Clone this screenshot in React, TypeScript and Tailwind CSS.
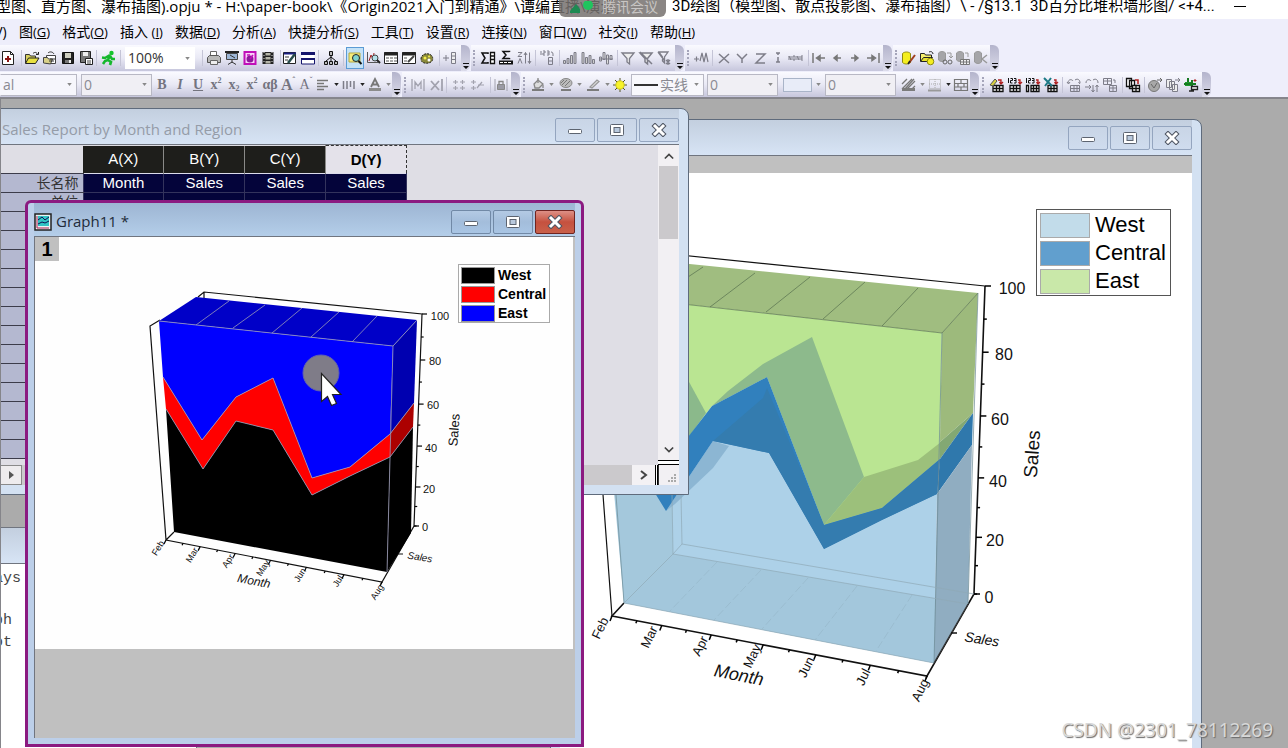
import React from "react";

type IconName = keyof typeof icons;

const GREY = "#7d7d88";

// 16x16 toolbar glyphs
const icons = {
  newDoc: (
    <>
      <path d="M2.500 1.500h8l3 3v10h-11z" fill="#fff" stroke="#222" />
      <path d="M10.500 1.500v3h3" fill="none" stroke="#222" />
      <path d="M8 6v6M5 9h6" stroke="#8c1414" strokeWidth="2" />
    </>
  ),
  open: (
    <>
      <path d="M1.500 13V4.500h4l1 1.500h5v2" fill="#d8d060" stroke="#333" />
      <path d="M1.500 13.500l3-5.500h10.500l-3.500 5.500z" fill="#e8e040" stroke="#222" />
      <path d="M9 3.500c2-2 4-1 4.500 1M12 4.500h2.500V2" fill="none" stroke="#222" />
    </>
  ),
  openTemplate: (
    <>
      <path d="M4.500 5.500h9v8h-9z" fill="#fff" stroke="#444" />
      <path d="M1.500 13V7.500h4l1 1.500h4l-2 5z" fill="#d8d088" stroke="#444" />
      <path d="M6 3c2-2 5-1 6 1M7 11h5M8 9h5" fill="none" stroke="#333" />
    </>
  ),
  save: (
    <>
      <path d="M2.500 2.500h11v11h-11z" fill="#222" stroke="#111" />
      <path d="M5 3h6v5H5z" fill="#cfcfc0" />
      <path d="M5 10h6v3H5z" fill="#777" />
      <path d="M9 10h2v3H9z" fill="#eee" />
    </>
  ),
  saveTemplate: (
    <>
      <path d="M2.500 1.500h10v11h-10z" fill="#777" stroke="#222" />
      <path d="M5 2h5v4H5z" fill="#eee" />
      <path d="M7.500 8.500h7v6h-7z" fill="#fff" stroke="#222" />
      <path d="M9 11h4M9 13h4" stroke="#444" />
    </>
  ),
  run: (
    <>
      <circle cx="11.500" cy="3" r="2.200" fill="#15c42c" />
      <path d="M10 5L5 8 2 7.500M10 5l-2 5 3 2-1 3M8 10l-3 1-2 3M10 6l2 3h3" fill="none" stroke="#15b82c" strokeWidth="2.600" />
    </>
  ),
  printer: (
    <>
      <path d="M4.500 6V1.500h6V6" fill="#fff" stroke="#666" />
      <path d="M1.500 7.500l2-2h9l2 2v5h-13z" fill="#b8b8b8" stroke="#555" />
      <path d="M4.500 10.500h7v4h-7z" fill="#eee" stroke="#666" />
    </>
  ),
  projector: (
    <>
      <path d="M1 2h14" stroke="#222" strokeWidth="2" />
      <path d="M2.500 3.500h11v6h-11z" fill="#9db6d6" stroke="#444" />
      <path d="M8 10v3M4 14.500l4-2.500 4 2.500M6 5l5 3" fill="none" stroke="#333" />
    </>
  ),
  magenta: (
    <>
      <path d="M2.500 2h11v12h-11z" fill="#fbd0fa" stroke="#c010b8" strokeWidth="2" />
      <circle cx="8" cy="9" r="3.500" fill="#8d1a9c" />
      <path d="M8 9l3-4M5 5h3" stroke="#c010b8" strokeWidth="1.500" />
    </>
  ),
  film: (
    <>
      <path d="M2.500 2h11v12h-11z" fill="#222" />
      <path d="M5.500 3h5v2.500h-5zM5.500 7h5v2.500h-5zM5.500 11h5v2.500h-5z" fill="#b5b5a8" />
      <path d="M4 2v12M12 2v12" stroke="#ddd" strokeDasharray="1 2" />
    </>
  ),
  note: (
    <>
      <path d="M1.500 2.500h12v11h-12z" fill="#fff" stroke="#222" />
      <path d="M2 3.500h12" stroke="#1a1f80" strokeWidth="2" />
      <path d="M3 7h4M3 10h3" stroke="#333" />
      <path d="M6 13l7-9" stroke="#264a4a" strokeWidth="2.500" />
    </>
  ),
  stack: (
    <>
      <path d="M1.500 2.500h13v11h-13z" fill="#fff" />
      <path d="M1 3.500h14M1 9.500h14" stroke="#14146c" strokeWidth="3" />
      <path d="M1.500 10v4h13v-4" fill="#fff" stroke="#14146c" />
    </>
  ),
  tree: (
    <>
      <path d="M6.500 1.500h3v4h-3zM1.500 11.500h3v3h-3zM6.500 11.500h3v3h-3zM11.500 11.500h3v3h-3z" fill="#bbb" stroke="#111" />
      <path d="M8 6v5M8 7L3 11M8 7l5 4" stroke="#111" fill="none" />
    </>
  ),
  explorer: (
    <>
      <path d="M2 3h11v9H2z" fill="#f5eb7c" stroke="#b5a940" />
      <circle cx="9" cy="8" r="3.500" fill="#7fd4cf" stroke="#222" />
      <path d="M11.500 11l3 3" stroke="#111" strokeWidth="2" />
    </>
  ),
  chartFind: (
    <>
      <path d="M2.500 2v10.500H13" fill="none" stroke="#555" />
      <path d="M4 11l2-6 2 4 1-6" fill="none" stroke="#a02020" />
      <circle cx="10" cy="8" r="3" fill="#b4e0e8" stroke="#444" />
      <path d="M12 10l3 3" stroke="#222" strokeWidth="2" />
    </>
  ),
  sheet: (
    <>
      <path d="M1.500 2.500h13v11h-13z" fill="#fff" stroke="#222" />
      <path d="M1 4h14" stroke="#222" strokeWidth="3" />
      <path d="M3 8h3M7 8h3M11 8h3M3 11h3M7 11h3M11 11h3" stroke="#555" />
    </>
  ),
  sheetPen: (
    <>
      <path d="M1.500 2.500h13v11h-13z" fill="#fff" stroke="#222" />
      <path d="M1 4h14" stroke="#222" strokeWidth="3" />
      <path d="M3 8h3M3 11h3" stroke="#555" />
      <path d="M7 12l6-6" stroke="#444" strokeWidth="2" />
    </>
  ),
  palette: (
    <>
      <path d="M2 9c0-4 4-6 8-5s5 6 2 8-10 2-10-3z" fill="#8b8a3a" stroke="#222" strokeDasharray="2 1" />
      <circle cx="6" cy="8" r="1.500" fill="#f5ef4a" />
      <circle cx="10" cy="10" r="1.500" fill="#fff" />
      <circle cx="10" cy="6.500" r="1" fill="#f5ef4a" />
    </>
  ),
  addColumn: (
    <>
      <path d="M1 8h6M4 5v6" stroke={GREY} />
      <path d="M9.500 2.500h4v11h-4zM9.500 6h4M9.500 9.500h4" fill="#eee" stroke={GREY} />
    </>
  ),
  sigmaSheet: (
    <>
      <path d="M8 4V3H2l3 5-3 5h6v-1" fill="none" stroke="#111" strokeWidth="1.500" />
      <path d="M10.500 2.500h4v11h-4zM10 6h5M10 9.500h5" fill="#fff" stroke="#111" strokeWidth="1.300" />
    </>
  ),
  sigmaRow: (
    <>
      <path d="M11.500 2V1.500H5L8 5 5 8.500h6.500V8" fill="none" stroke="#111" strokeWidth="1.500" />
      <path d="M1 12.500h14" stroke="#111" strokeWidth="4" />
      <path d="M2 12.500h12" stroke="#fff" strokeDasharray="3 1" />
    </>
  ),
  sort: (
    <path d="M2 2.500h4l-4 4h4M2 13.500l2-5 2 5M9.500 2.500v11M8 5l1.500-2.500L11 5M13.500 2.500v11M12 11l1.500 2.500L15 11" fill="none" stroke={GREY} />
  ),
  digits: (
    <>
      <path d="M2 1v4M4 1h2v2H4v2h2M8 1h2v4H8M8 3h2" fill="none" stroke={GREY} />
      <path d="M9.500 7.500h4v7h-4zM9.500 11h4M12 2c2 0 2 1 2 4" fill="none" stroke={GREY} />
    </>
  ),
  bars: <path d="M1.500 13.500v-3h2v3zM5 13.500V8.500h2v5zM8.500 13.500v-8h2v8zM12 13.500v-11h2v11z" fill="#ccc" stroke={GREY} />,
  bars2: <path d="M2 13.500v-11h2v11zM5.500 13.500v-6h2v6zM9 13.500v-8h2v8zM12.500 13.500v-4h2v4z" fill="#ccc" stroke={GREY} />,
  bars3: <path d="M1.500 7h2v4h-2zM5 2.500h2v7H5zM8.500 5h2v9h-2zM12 5.500h2v4h-2zM1 9h14" fill="#ddd" stroke={GREY} />,
  filter: <path d="M2 3h12L9.500 8.500V14L7 12V8.500z" fill="#eee" stroke={GREY} strokeWidth="1.300" />,
  filterOff: (
    <path d="M2 3h12L9.500 8.500V14L7 12V8.500zM2 2l12 12" fill="#eee" stroke={GREY} strokeWidth="1.500" />
  ),
  filterAdd: (
    <path d="M3 2h9L8.500 7v6L6.500 11V7zM2 2l6 8M10 10l4 4M14 10l-4 4M12 9v6" fill="none" stroke={GREY} strokeWidth="1.300" />
  ),
  wave: <path d="M0 9h5M2.500 6.500v5M6 11l2-8 2 9 2-9 2 9" fill="none" stroke={GREY} strokeWidth="1.200" />,
  xAxis: <path d="M3 4l10 9M13 4L3 13" fill="none" stroke={GREY} strokeWidth="1.500" />,
  yAxis: <path d="M3 4l5 5 5-5M8 9v4" fill="none" stroke={GREY} strokeWidth="1.500" />,
  zAxis: <path d="M4 4h9l-9 9h9" fill="none" stroke={GREY} strokeWidth="1.500" />,
  error: <path d="M8 3v2M6 3h4M8 7v5M6 12h4" fill="none" stroke={GREY} strokeWidth="1.500" />,
  none: <path d="M1 10V6l2 4V6M5 6h2v4H5zM9 10V6l2 4V6M15 6h-2v4h2M13 8h2" fill="none" stroke={GREY} />,
  first: <path d="M2 3v10M14 8H6M9 5.500L5.500 8 9 10.500z" fill="#777" stroke="#777" strokeWidth="1.500" />,
  prev: <path d="M12 8H6M8 5.500L5 8l3 2.500z" fill="#777" stroke="#777" strokeWidth="1.500" />,
  next: <path d="M4 8h6M8 5.500L11 8l-3 2.500z" fill="#777" stroke="#777" strokeWidth="1.500" />,
  last: <path d="M14 3v10M2 8h7M7 5.500L10.500 8 7 10.500z" fill="#777" stroke="#777" strokeWidth="1.500" />,
  dbPen: (
    <>
      <path d="M1.500 3.500c2-2 6-2 8 0v9c-2 2-6 2-8 0z" fill="#f4ee20" stroke="#8f8a10" />
      <path d="M8 13l6-8" stroke="#a04020" strokeWidth="2" />
      <path d="M7 14l2-3" stroke="#222" strokeWidth="1.500" />
    </>
  ),
  dbOpen: (
    <>
      <path d="M1.500 11V3.500h4l1 1.500h6v3" fill="#f4ee70" stroke="#222" />
      <path d="M1.500 11.500l3-4h9l-3 4z" fill="#e6df30" stroke="#222" />
      <circle cx="11.500" cy="11.500" r="3.300" fill="#f4ee20" stroke="#8f8a10" />
      <path d="M10 2c2-1 4 0 4 2" stroke="#222" fill="none" />
    </>
  ),
  dbView: (
    <>
      <path d="M1.500 3c2-2 5-2 7 0v7c-2 2-5 2-7 0z" fill="#a5a5a8" stroke="#999" />
      <circle cx="8" cy="12" r="2" fill="none" stroke="#666" />
      <circle cx="13" cy="12" r="2" fill="none" stroke="#666" />
      <path d="M10 3h4v5M12 6l2 2 2-2" fill="none" stroke="#999" />
    </>
  ),
  dbSheet: (
    <>
      <path d="M1.500 3c2-2 5-2 7 0v7c-2 2-5 2-7 0z" fill="#a5a5a8" stroke="#999" />
      <path d="M5.500 9.500h9v5h-9zM5 12h10M8.500 9v6M11.500 9v6" fill="#eee" stroke="#777" />
      <path d="M10 3h3v4" fill="none" stroke="#999" />
    </>
  ),
  dbCut: (
    <>
      <path d="M1.500 3c2-2 5-2 7 0v9c-2 2-5 2-7 0z" fill="#a5a5a8" stroke="#999" />
      <path d="M14 5l-5 4 5 4" fill="none" stroke="#999" strokeWidth="1.500" />
    </>
  ),
  alignLeft: <path d="M2 3.500h11M2 6.500h7M2 9.500h11M2 12.500h7" stroke="#777" strokeWidth="1.300" />,
  spacing: <path d="M2.500 4v8M6 4v8M9.500 4v6M13 4v8" fill="none" stroke={GREY} strokeWidth="1.500" />,
  fontColor: (
    <>
      <path d="M4 10L8 2l4 8M5.500 7.500h5" fill="none" stroke="#777" strokeWidth="1.800" />
      <path d="M2 11h12v3H2z" fill="#8b8b8b" />
    </>
  ),
  maskM: <path d="M2 2v12M14 2v12M5 12V5l3 4 3-4v7" fill="none" stroke="#a2a2ae" strokeWidth="1.300" />,
  maskX: <path d="M14 2v12M3 4l8 9M11 4l-8 9" fill="none" stroke="#a2a2ae" strokeWidth="1.800" />,
  split: <path d="M2 5h5M9 5h5M2 11h5M9 11h5M4.500 3v4M11.500 3v4M4.500 9v4M11.500 9v4" stroke="#a2a2ae" strokeWidth="1.200" />,
  split2: <path d="M2 5h5M2 11h5M4.500 3v4M4.500 9v4M8 11l5-6M9 8h6" stroke="#a2a2ae" strokeWidth="1.200" />,
  lock: (
    <>
      <path d="M2 2v12M14 2v12" stroke="#a2a2ae" />
      <path d="M4.500 7.500h7v5h-7z" fill="#9a9aa4" stroke="#888" />
      <path d="M6 7V4.500h4V7" fill="none" stroke="#888" strokeWidth="1.300" />
    </>
  ),
  fill: (
    <>
      <path d="M4 7l4-4 5 4-4 4H5z" fill="#ddd" stroke="#888" strokeWidth="1.300" />
      <path d="M8 6V1M13 8v3" stroke="#888" strokeWidth="1.300" />
      <path d="M2 12h12v2H2z" fill="#7b7b7b" />
    </>
  ),
  pattern: (
    <>
      <ellipse cx="8" cy="6" rx="6" ry="4.500" fill="#bbb" stroke="#888" />
      <path d="M4 8l5-5M7 9l5-5M3 6l3-3" stroke="#777" />
      <path d="M3 12h10v2H3z" fill="#7b7b7b" />
    </>
  ),
  line: (
    <>
      <path d="M4 10l7-7 2 1.500-7 6.500z" fill="#ddd" stroke="#999" strokeWidth="1.200" />
      <path d="M1 12h12v2H1z" fill="#7b7b7b" />
    </>
  ),
  sun: (
    <>
      <path d="M8 1v14M1 8h14M3 3l10 10M13 3L3 13" stroke="#55552a" />
      <circle cx="8" cy="8" r="4.200" fill="#f7f32a" stroke="#c9c21a" />
    </>
  ),
  hatch: (
    <>
      <path d="M1 7l5-5M1 12L11 2M6 12l8-8M11 12l3-3M4 12l9-10" stroke="#777" strokeWidth="1.300" />
      <path d="M1 11h13v3H1z" fill="#7b7b7b" />
    </>
  ),
  border: (
    <>
      <path d="M2.500 2.500h11v9h-11zM8 2v10M2 7h12" fill="none" stroke="#aaa" strokeDasharray="1 1" />
      <path d="M1 13.500h13" stroke="#999" strokeWidth="2" />
    </>
  ),
  grid: <path d="M1.500 2.500h13v11h-13zM1 6.500h14M1 10h14M8 2v4M5 6v4M11 6v4M8 10v4" fill="none" stroke="#777" strokeWidth="1.200" />,
  importPen: (
    <>
      <path d="M4 8.500h10v6H4zM4 11.500h10M7.500 8v7M10.500 8v7" fill="#fff" stroke="#111" strokeWidth="1.300" />
      <path d="M1 8l5-6 2 2-4 5z" fill="#d8d040" stroke="#555" />
      <path d="M9 3h3v3M10.500 5L12 7l2-2" fill="none" stroke="#b02020" strokeWidth="1.300" />
    </>
  ),
  import123: (
    <>
      <path d="M3 8.500h10v6H3zM3 11.500h10M6.500 8v7M9.500 8v7" fill="#fff" stroke="#111" strokeWidth="1.300" />
      <path d="M1.500 1v5M3.500 1.500h2v2h-2V6h2M7 1.500h2V6H7M7 3.500h2" fill="none" stroke="#111" />
      <path d="M11 3h2v3M11.500 5L13 7l2-2" fill="none" stroke="#b02020" strokeWidth="1.300" />
    </>
  ),
  importCols: (
    <>
      <path d="M1.500 1v5M3.500 1.500h2v2h-2V6h2M7 1.500h2V6H7M7 3.500h2" fill="none" stroke="#111" />
      <path d="M1.500 8.500h2v6h-2zM6 8.500h8v6H6zM6 11.500h8M8.500 8v7M11.500 8v7" fill="#fff" stroke="#111" strokeWidth="1.300" />
      <path d="M11 3h2v3M11.500 5L13 7l2-2" fill="none" stroke="#b02020" strokeWidth="1.300" />
    </>
  ),
  importX: (
    <>
      <path d="M5 8.500h9v6H5zM5 11.500h9M8 8v7M11 8v7" fill="#fff" stroke="#111" strokeWidth="1.300" />
      <path d="M1 1l8 8M8 1L2 9" stroke="#1d7a86" strokeWidth="2" />
      <path d="M11 3h2v3M11.500 5L13 7l2-2" fill="none" stroke="#b02020" strokeWidth="1.300" />
    </>
  ),
  sheetCycle: (
    <>
      <path d="M4.500 8.500h9v6h-9zM4 11.500h10M8 8v7M11 8v7" fill="none" stroke={GREY} />
      <path d="M2 6c0-4 4-4 5-2M9 3c3-2 5 0 5 3M1 5l1.500 2L4 5M12.500 5l1.500 2" fill="none" stroke={GREY} />
    </>
  ),
  arrowsCycle: <path d="M2 6c0-4 4-4 5-2M9 3c3-2 5 0 5 3M1 10h6M5 8l2 2-2 2M9 8v7M7.500 13L9 15l1.500-2M13 8v7M11.500 10L13 8l1.500 2" fill="none" stroke={GREY} />,
  sheets: <path d="M1.500 1.500h8v6h-8zM1 4h9M5.500 1v6M7.500 8.500h7v6h-7zM7 11h8M11 8v7M11 3h2v3" fill="none" stroke={GREY} />,
  batch: (
    <>
      <path d="M1.500 1.500h5v8h-5zM4.500 3.500h5v8h-5z" fill="#fff" stroke="#111" strokeWidth="1.300" />
      <path d="M7.500 8.500h7v6h-7zM7 11.500h8M11 8v7" fill="#fff" stroke="#111" strokeWidth="1.300" />
      <path d="M10 3h3v4" fill="none" stroke="#b02020" strokeWidth="1.500" />
    </>
  ),
  dial: (
    <>
      <circle cx="7" cy="9" r="5.500" fill="#a8a8a8" stroke="#777" />
      <path d="M4 7l3 4 3-5M10 3h5M13 1l2 2-2 2" fill="none" stroke="#666" />
    </>
  ),
  copies: <path d="M1.500 2.500h5v8h-5zM4.500 4.500h5v8h-5zM7.500 7.500h5v7h-5zM10 3h5M13 1l2 2-2 2" fill="#eee" stroke={GREY} />,
  export: (
    <>
      <path d="M2 5h7v4H2z" fill="#1c9c2c" />
      <path d="M5 1v4M1 7h12M9 3v8" stroke="#187a22" strokeWidth="2" />
      <path d="M8.500 9.500h6v3h-6zM6 14h5" fill="#fff" stroke="#222" strokeWidth="1.300" />
      <path d="M12 2v3M10.500 3.500h3" stroke="#b02020" />
    </>
  ),
};

function Tool({ name, active }: { name: IconName; active?: boolean }) {
  return (
    <button
      type="button"
      aria-label={name}
      className={
        active
          ? "flex h-[22px] w-[18px] shrink-0 items-center justify-center border border-[#5b9bd5] bg-[#c4e2f6]"
          : "flex h-5 w-[18px] shrink-0 items-center justify-center"
      }
    >
      <svg viewBox="0 0 16 16" className="h-4 w-4 shrink-0">
        {icons[name]}
      </svg>
    </button>
  );
}

function Group({ names, className = "", first = false, active }: { names: IconName[]; className?: string; first?: boolean; active?: IconName }) {
  return (
    <div className={`flex shrink-0 items-center justify-center ${className}`}>
      {!first && <span className="-mr-px h-4 w-px shrink-0 bg-[#c4c4d6]" />}
      <div className="flex min-w-0 flex-1 items-center justify-center">
        {names.map((n) => (
          <Tool key={n} name={n} active={n === active} />
        ))}
      </div>
    </div>
  );
}

function Band({ children, dots = true }: { children: React.ReactNode; dots?: boolean }) {
  return (
    <div className="mr-px flex h-full shrink-0 items-stretch rounded-r-md bg-linear-to-b from-[#fafaff] via-[#e9e9f5] to-[#c6c6dc]">
      {dots && (
        <span className="flex w-1.5 items-center justify-center">
          <span className="h-4 border-l-2 border-dotted border-[#a5a5ba]" />
        </span>
      )}
      <div className="flex items-center">{children}</div>
      <button type="button" aria-label="Toolbar options" className="flex w-[9px] items-end justify-center rounded-r-md bg-linear-to-b from-[#b4b4cc] to-[#dcdcea] pb-0.5">
        <svg viewBox="0 0 6 6" className="h-1.5 w-1.5">
          <path d="M0 0h6v1H0zM0 3h6L3 6z" fill="#111" />
        </svg>
      </button>
    </div>
  );
}

function Caret({ dark = false }: { dark?: boolean }) {
  return (
    <svg viewBox="0 0 6 4" className="h-[3px] w-[5px] shrink-0">
      <path d="M0 0h6L3 4z" fill={dark ? "#222" : "#888"} />
    </svg>
  );
}

function SplitTool({ name, dark }: { name: IconName; dark?: boolean }) {
  return (
    <div className="flex w-[26px] shrink-0 items-center gap-0.5">
      <Tool name={name} />
      <Caret dark={dark} />
    </div>
  );
}

function Combo({ label, value, className }: { label: string; value: string; className: string }) {
  return (
    <div className={`flex shrink-0 items-center border pr-1 ${className}`}>
      <select aria-label={label} className="w-full min-w-0 flex-1 appearance-none bg-transparent pl-0.5 leading-5 outline-none">
        <option>{value}</option>
      </select>
      <Caret />
    </div>
  );
}

const menus = [
  ["图", "G"],
  ["格式", "O"],
  ["插入 ", "I"],
  ["数据", "D"],
  ["分析", "A"],
  ["快捷分析", "S"],
  ["工具", "T"],
  ["设置", "R"],
  ["连接", "N"],
  ["窗口", "W"],
  ["社交", "I"],
  ["帮助", "H"],
];

function TextTools() {
  const cls = "flex w-[18px] shrink-0 items-center justify-center leading-5";
  const small = "text-[8px] leading-3";
  return (
    <div className="flex w-[160px] items-center justify-center font-['Liberation_Serif',serif] text-[14px] text-[#74747f]">
      <button type="button" className={`${cls} font-bold`}>B</button>
      <button type="button" className={`${cls} font-bold italic`}>I</button>
      <button type="button" className={`${cls} font-bold underline`}>U</button>
      <button type="button" className={`${cls} font-bold`}>x<span className={`${small} self-start`}>2</span></button>
      <button type="button" className={`${cls} font-bold`}>x<span className={`${small} self-end`}>2</span></button>
      <button type="button" className={`${cls} font-bold`}>x<span className={`${small} self-start`}>2</span></button>
      <button type="button" className={`${cls} font-bold`}>αβ</button>
      <button type="button" className={`${cls} text-[16px] font-bold`}>A<span className={`${small} self-start`}>ˆ</span></button>
      <button type="button" className={cls}>A<span className={`${small} self-start`}>ˇ</span></button>
    </div>
  );
}

function WindowButtons({ active = false }: { active?: boolean }) {
  const face = active
    ? "bg-linear-to-b from-[#b4cae4] via-[#a3bddb] to-[#a9c5e4] border-[#7189a6]"
    : "bg-linear-to-b from-[#c9d5e6] to-[#cfdcee] border-[#94a5bf]";
  const btn = "flex h-6 w-10 items-center justify-center rounded-xs border";
  return (
    <div className="ml-auto flex shrink-0 gap-0.5">
      <button type="button" aria-label="Minimize" className={`${btn} ${face}`}>
        <svg viewBox="0 0 16 14" className="h-3.5 w-4">
          <rect x="1.500" y="6.500" width="13" height="4" rx="1" fill="#fff" stroke="#5d6470" />
        </svg>
      </button>
      <button type="button" aria-label="Maximize" className={`${btn} ${face}`}>
        <svg viewBox="0 0 16 14" className="h-3.5 w-4">
          <rect x="1.500" y="1.500" width="13" height="11" rx="1" fill="#fff" stroke="#5d6470" />
          <rect x="5" y="4.500" width="6" height="5" fill="#b9c9dd" stroke="#5d6470" />
        </svg>
      </button>
      <button
        type="button"
        aria-label="Close"
        className={active ? `${btn} border-[#6f2420] bg-linear-to-b from-[#dd9086] via-[#c5513f] to-[#c9604a]` : `${btn} ${face}`}
      >
        <svg viewBox="0 0 16 14" className="h-3.5 w-4">
          <path d="M4 3l8 8M12 3l-8 8" stroke="#4f5663" strokeWidth="5" strokeLinecap="square" />
          <path d="M4 3l8 8M12 3l-8 8" stroke="#fff" strokeWidth="3" strokeLinecap="square" />
        </svg>
      </button>
    </div>
  );
}

const columns = [
  { head: "A(X)", name: "Month" },
  { head: "B(Y)", name: "Sales" },
  { head: "C(Y)", name: "Sales" },
  { head: "D(Y)", name: "Sales" },
];

const rowHeads = ["长名称", "单位", "", "", "", "", "", "", "", "", "", "", "", "", ""];

function BookWindow() {
  return (
    <section className="absolute -left-[5px] top-[9px] flex h-[387px] w-[693px] flex-col rounded-tr-lg border border-[#5f6b7c] bg-[#d3e1f2] pb-[9px] pr-[9px]">
      <header className="flex h-[35px] shrink-0 items-center bg-linear-to-b from-[#c3cfdf] to-[#d7e4f5] pl-[5px] pt-1.5 font-['Open_Sans','Noto_Sans',sans-serif] text-[15px] text-[#959ca8]">
        <h2>Sales Report by Month and Region</h2>
        <WindowButtons />
      </header>
      <div className="flex min-h-0 flex-1 border-t border-[#70757f] bg-[#dfdee5] pl-[3px]">
        <div className="flex min-w-0 flex-1 flex-col">
          <div className="min-h-0 flex-1 overflow-hidden">
            <table className="w-[407px] table-fixed border-collapse font-['Liberation_Sans','Noto_Sans_CJK_SC',sans-serif] text-[15px] leading-4">
              <colgroup>
                <col className="w-[83px]" />
                <col span={4} />
              </colgroup>
              <thead>
                <tr className="h-7">
                  <td />
                  {columns.map((c, i) => (
                    <th
                      key={c.head}
                      className={
                        i === 3
                          ? "border border-dashed border-[#333] bg-[#e4e2ea] font-bold text-black"
                          : "border-r border-[#8a8a88] bg-[#1e1e1b] font-normal text-white"
                      }
                    >
                      {c.head}
                    </th>
                  ))}
                </tr>
              </thead>
              <tbody>
                {rowHeads.map((label, r) => (
                  <tr key={r} className="h-[19px]">
                    <th className="border-y border-[#3c3c4a] bg-[#b4b8d0] p-0 pr-1 text-right text-[14px] font-normal text-[#333]">{label}</th>
                    {columns.map((c, i) => (
                      <td
                        key={i}
                        className={
                          r === 0
                            ? "border border-b-[#33335c] border-t-[#dcdcec] border-x-[#33335c] bg-[#04043a] p-0 text-center text-white"
                            : "border border-[#33335c] bg-[#04043a] p-0"
                        }
                      >
                        {r === 0 ? c.name : ""}
                      </td>
                    ))}
                  </tr>
                ))}
              </tbody>
            </table>
          </div>
          <div className="flex h-5 shrink-0 items-stretch bg-[#f3f1f4]">
            <button type="button" aria-label="Next sheet" className="flex w-[22px] items-center justify-center border border-[#8a8a8a] bg-[#eeecee]">
              <svg viewBox="0 0 6 8" className="h-2 w-1.5">
                <path d="M1 0l5 4-5 4z" fill="#555" />
              </svg>
            </button>
            <span className="flex-1 bg-[#cbc9cc]" />
            <button type="button" aria-label="Scroll right" className="flex w-[23px] items-center justify-center">
              <svg viewBox="0 0 8 10" className="h-2.5 w-2">
                <path d="M1 1l5 4-5 4" fill="none" stroke="#444" strokeWidth="2" />
              </svg>
            </button>
            <span className="w-[3px] border-x border-black bg-white" />
          </div>
        </div>
        <div className="flex w-[21px] flex-col items-center bg-[#f2f0f3]">
          <button type="button" aria-label="Scroll up" className="flex h-[21px] items-center">
            <svg viewBox="0 0 12 8" className="h-2 w-2.5">
              <path d="M1 7l5-5 5 5" fill="none" stroke="#444" strokeWidth="2" />
            </svg>
          </button>
          <span className="h-[73px] w-[19px] bg-[#cbc9cc]" />
          <button type="button" aria-label="Scroll down" className="mb-1.5 mt-auto">
            <svg viewBox="0 0 12 8" className="h-2 w-2.5">
              <path d="M1 1l5 5 5-5" fill="none" stroke="#444" strokeWidth="2" />
            </svg>
          </button>
          <span className="h-[5px] w-full border-y border-black bg-white" />
          <svg viewBox="0 0 21 20" className="h-5 w-[21px] shrink-0">
            <path d="M16 10h2M13 13h2M16 13h2M10 16h2M13 16h2M16 16h2" stroke="#aaa" strokeWidth="2" />
            <path d="M.5 0v20" stroke="#333" />
          </svg>
        </div>
      </div>
    </section>
  );
}

type Pt = [number, number];
const pts = (list: Pt[]) => list.map((p) => p.join(",")).join(" ");
const lerp = (a: Pt, b: Pt, t: number): Pt => [a[0] + (b[0] - a[0]) * t, a[1] + (b[1] - a[1]) * t];

// Axis ticks: majors at the given fractions, minors half way between
function Ticks({ from, to, stops, dx, dy, width }: { from: Pt; to: Pt; stops: number[]; dx: number; dy: number; width: number }) {
  return (
    <g stroke="#000" strokeWidth={width}>
      {stops.map((t, i) => {
        const [x, y] = lerp(from, to, t);
        const [mx, my] = lerp(from, to, (t + (stops[i + 1] ?? t)) / 2);
        return (
          <React.Fragment key={t}>
            <path d={`M${x} ${y}l${dx} ${dy}`} />
            <path d={`M${mx} ${my}l${dx / 2} ${dy / 2}`} />
          </React.Fragment>
        );
      })}
    </g>
  );
}

type Label = { text: string; x: number; y: number };

function Labels({ items, size, rotate = 0 }: { items: Label[]; size: number; rotate?: number }) {
  return (
    <g fontSize={size} fill="#111" textAnchor="middle">
      {items.map((l) => (
        <text key={l.text + l.x} x={l.x} y={l.y} dominantBaseline="central" transform={rotate ? `rotate(${rotate} ${l.x} ${l.y})` : undefined}>
          {l.text}
        </text>
      ))}
    </g>
  );
}

function SolidChart() {
  const east: Pt[] = [[163, 377], [202, 440], [236, 397], [273, 378], [312, 478], [350, 467], [390, 434]];
  const west: Pt[] = [[166, 409], [203, 469], [236, 421], [273, 430], [312, 495], [350, 476], [390, 457]];
  const legend = [
    { name: "West", color: "#000" },
    { name: "Central", color: "#f00" },
    { name: "East", color: "#00f" },
  ];
  return (
    <svg viewBox="35 237 538 412" className="block h-[412px] w-[538px] font-['Liberation_Sans',Arial,sans-serif]" role="img" aria-label="3D stacked wall chart">
      <g fill="none" stroke="#111" strokeWidth="1.200">
        <path d="M198 297l6-5 218 22-8 212-32 56-216-42-16-214 10-6M204 292v6M166 540l8-8" />
      </g>
      <polygon points="159,321 196,297 417,320 393,346" fill="#0000c8" />
      <polygon points={pts([[159, 321], [393, 346], [390, 434], ...[...east].reverse()])} fill="#00f" />
      <polygon points={pts([...east, ...[...west].reverse()])} fill="#f00" />
      <polygon points={pts([...west, [387, 572], [174, 532]])} />
      <polygon points="393,346 417,320 414,403 390,434" fill="#0000b0" />
      <polygon points="390,434 414,403 413,427 390,457" fill="#ac0000" />
      <polygon points="390,457 413,427 411,533 387,572" />
      <g fill="none" stroke="#9a9ab8" strokeWidth="0.800">
        <path d="M159 321l234 25 24-26M393 346l-6 226" />
        <path d="M229 301l-33 24M265 305l-32 23M302 308l-30 25M339 312l-28 25M377 316l-25 26" />
        <polyline points={pts([...east, [414, 403]])} />
        <polyline points={pts([...west, [413, 427]])} />
      </g>
      <Ticks from={[422, 314]} to={[414, 526]} stops={[0, 0.217, 0.425, 0.623, 0.816, 1]} dx={5} dy={0} width={1.2} />
      <Ticks from={[166, 540]} to={[382, 582]} stops={[0, 0.158, 0.32, 0.484, 0.65, 0.824, 1]} dx={-2} dy={4} width={1.2} />
      <path d="M398 554l5 0" stroke="#111" />
      <Labels
        size={11}
        items={[
          { text: "100", x: 440, y: 316 },
          { text: "80", x: 435, y: 361 },
          { text: "60", x: 433, y: 405 },
          { text: "40", x: 431, y: 448 },
          { text: "20", x: 429, y: 489 },
          { text: "0", x: 425, y: 527 },
        ]}
      />
      <Labels
        size={9}
        rotate={-58}
        items={[
          { text: "Feb", x: 158, y: 548 },
          { text: "Mar", x: 192, y: 555 },
          { text: "Apr", x: 228, y: 561 },
          { text: "May", x: 263, y: 568 },
          { text: "Jun", x: 300, y: 575 },
          { text: "Jul", x: 338, y: 581 },
          { text: "Aug", x: 377, y: 592 },
        ]}
      />
      <Labels size={13} rotate={-86} items={[{ text: "Sales", x: 454, y: 430 }]} />
      <g fontStyle="italic">
        <Labels size={12} rotate={11} items={[{ text: "Month", x: 254, y: 581 }]} />
        <Labels size={10} rotate={9} items={[{ text: "Sales", x: 420, y: 557 }]} />
      </g>
      <rect x="458.500" y="264.500" width="91" height="58" fill="#fff" stroke="#aaa" />
      {legend.map((l, i) => (
        <g key={l.name}>
          <rect x="461.500" y={267.5 + i * 19} width="33" height="16" fill={l.color} stroke="#999" />
          <text x="498" y={280 + i * 19} fontSize="14" fontWeight="bold">
            {l.name}
          </text>
        </g>
      ))}
      <circle cx="321" cy="373" r="18" fill="#7f7c88" stroke="#6060b0" />
      <path d="M321.500 373.500v28l6-5 4 9 5-2-4-9h8.500z" fill="#fff" stroke="#222" strokeWidth="1.200" />
    </svg>
  );
}

function GlassChart() {
  const legend = [
    { name: "West", color: "#c2dcea" },
    { name: "Central", color: "#619fce" },
    { name: "East", color: "#c9e8a9" },
  ];
  return (
    <svg viewBox="560 173 632 586" className="block h-[586px] w-[632px] font-['Liberation_Sans',Arial,sans-serif]" role="img" aria-label="3D percent stacked wall chart">
      <g fill="none" stroke="#111" strokeWidth="1.200">
        <path d="M670 254l315 32M596 400l16 216" />
        <path d="M985 286l-11 308-47 82-315-60 12-13" strokeWidth="1.600" />
      </g>
      <polygon points="640,259 978,293 942,333 620,297" fill="#a0bd80" />
      <polygon points="620,297 942,333 940,459 882,508 824,525 767,377 712,406 664,468 610,400" fill="#bae592" />
      <polygon points="688,380 706,413 688,438" fill="#8bb98b" />
      <polygon points="712,406 728,391 763,364 812,337 864,477 824,525 767,377" fill="#8dba8c" />
      <polygon points="864,477 918,460 941,442 940,459 882,508 824,525" fill="#9cc07b" />
      <polygon points="942,333 978,293 973,413 940,442" fill="#9dba7c" />
      <polygon points="940,442 973,413 940,459" fill="#83a873" />
      <polygon points="610,420 666,511 713,441 769,453 824,549 882,520 937,494 934,663 624,603" fill="#add1e8" />
      <polygon points="612,470 672,495 673,554 624,603" fill="#a4c8dc" />
      <polygon points="673,554 968,604 934,663 624,603" fill="#a3c7dc" />
      <polygon points="713,441 729,446 713,468 675,504 666,511" fill="#8cb6d3" />
      <polygon points="610,400 664,468 712,406 767,377 824,525 882,508 940,459 937,494 882,520 824,549 769,453 713,441 666,511 610,420" fill="#3180bd" />
      <polygon points="713,441 763,398 767,388 824,525 882,508 940,459 937,494 882,520 824,549 769,453" fill="#347caf" />
      <polygon points="940,459 973,413 972,445 937,494" fill="#2f78ac" />
      <polygon points="937,494 972,445 968,604 934,663" fill="#90adc1" />
      <g fill="none" stroke="#56704e" strokeWidth="0.700">
        <path d="M620 297l322 36 36-40M703 267l-15 10M755 273l-45 34M810 277l-44 35M865 282l-42 37M918 288l-36 38" />
        <path d="M942 333l-8 330M978 293l-10 311M616 495l8 108" stroke="#6b8a94" />
        <path d="M624 603l310 60M624 603l49-49M673 554l-1-60M682 544l-1-50M673 554l9-10 292 50M673 554l295 50" stroke="#8fa9b6" />
        <path d="M717 562l-48 50M761 570l-47 50M808 578l-46 51M857 586l-42 54M912 595l-36 56" stroke="#96b8ca" strokeDasharray="8 3" />
      </g>
      <path d="M968 604l-34 59" stroke="#333" strokeWidth="1.200" />
      <Ticks from={[985, 286]} to={[974, 594]} stops={[0, 0.215, 0.422, 0.623, 0.816, 1]} dx={6} dy={0} width={1.5} />
      <Ticks from={[612, 616]} to={[927, 676]} stops={[0, 0.158, 0.315, 0.48, 0.647, 0.82, 1]} dx={-2} dy={5} width={1.5} />
      <path d="M951 633h6" stroke="#111" strokeWidth="1.500" />
      <Labels
        size={16}
        items={[
          { text: "100", x: 1012, y: 288 },
          { text: "80", x: 1004, y: 354 },
          { text: "60", x: 1000, y: 419 },
          { text: "40", x: 998, y: 481 },
          { text: "20", x: 995, y: 540 },
          { text: "0", x: 989, y: 597 },
        ]}
      />
      <Labels
        size={13}
        rotate={-64}
        items={[
          { text: "Feb", x: 600, y: 628 },
          { text: "Mar", x: 649, y: 637 },
          { text: "Apr", x: 700, y: 646 },
          { text: "May", x: 752, y: 656 },
          { text: "Jun", x: 806, y: 667 },
          { text: "Jul", x: 863, y: 677 },
          { text: "Aug", x: 920, y: 690 },
        ]}
      />
      <Labels size={19} rotate={-86} items={[{ text: "Sales", x: 1032, y: 454 }]} />
      <g fontStyle="italic">
        <Labels size={18} rotate={11} items={[{ text: "Month", x: 739, y: 675 }]} />
        <Labels size={14} rotate={9} items={[{ text: "Sales", x: 982, y: 639 }]} />
      </g>
      <rect x="1036.500" y="209.500" width="134" height="86" fill="#fff" stroke="#555" />
      {legend.map((l, i) => (
        <g key={l.name}>
          <rect x="1040.500" y={213.5 + i * 28} width="49" height="24" fill={l.color} stroke="#aaa" />
          <text x="1095" y={232 + i * 28} fontSize="22">
            {l.name}
          </text>
        </g>
      ))}
    </svg>
  );
}

export default function App() {
  return (
    <div className="relative flex h-screen flex-col overflow-hidden bg-[#eeeefb] font-['Open_Sans','Noto_Sans_CJK_SC',sans-serif] text-black">
      <header className="flex h-[19px] shrink-0 items-center whitespace-pre bg-white pb-[7px] text-[15px] leading-4">
        <div className="flex w-[672px] shrink-0">
          <h1 className="-ml-1 font-normal">型图、直方图、瀑布插图).opju * - H:\paper-book\《Origin2021入门到精通》\谭编直播\演示</h1>
        </div>
        <span className="font-[Roboto,'Noto_Sans_CJK_SC',sans-serif]">3D绘图（模型图、散点投影图、瀑布插图）\ - /§13.1  3D百分比堆积墙形图/ &lt;+4...</span>
        <button type="button" aria-label="Minimize" className="ml-auto mr-[42px] h-px w-3 bg-black" />
      </header>

      {/* floating meeting badge */}
      <div className="absolute left-[559px] top-0 flex h-[17px] w-[107px] items-center justify-end gap-2 rounded-b-md bg-[#75716f]/85 pb-1 pr-2 text-[14px] leading-4 text-[#c9c6c4]">
        <svg viewBox="0 0 24 12" className="h-3 w-6">
          <path d="M0 10l6-7 4 5v4H0z" fill="#1d8a52" />
          <circle cx="18" cy="4" r="5" fill="#20c45e" />
        </svg>
        腾讯会议
      </div>

      <nav className="flex h-[26px] shrink-0 items-center gap-3 whitespace-pre text-[14px] leading-5">
        <button type="button" className="-ml-1.5 w-[13px] shrink-0">V)</button>
        {menus.map(([name, key]) => (
          <button key={name} type="button" className="shrink-0">
            {name}
            <span className="text-[13px]">
              (<u>{key}</u>)
            </span>
          </button>
        ))}
      </nav>

      <div className="flex h-[26px] shrink-0">
        <Band dots={false}>
          <Group first names={["newDoc"]} className="w-[21px] pr-1.5" />
          <Group names={["open", "openTemplate", "save", "saveTemplate"]} className="w-[75px]" />
          <Group names={["run"]} className="w-6" />
          <span className="mr-1 h-4 w-px bg-[#c4c4d6]" />
          <Combo label="Zoom" value="100%" className="mr-[7px] h-[22px] w-[70px] border-white bg-white text-[14px] text-[#333]" />
          <Group names={["printer", "projector", "magenta", "film"]} className="w-[78px]" />
          <Group names={["note", "stack"]} className="w-[38px]" />
          <Group names={["tree"]} className="w-[25px]" />
          <Group names={["explorer", "chartFind", "sheet", "sheetPen", "palette"]} active="explorer" className="w-24" />
          <Group names={["addColumn"]} className="w-[22px]" />
        </Band>
        <Band>
          <Group first names={["sigmaSheet", "sigmaRow", "sort"]} className="w-[58px]" />
          <Group names={["digits"]} className="w-6" />
          <Group names={["bars", "bars2", "bars3"]} className="w-[58px]" />
          <Group names={["filter", "filterOff", "filterAdd"]} className="w-[58px]" />
        </Band>
        <Band>
          <Group first names={["wave"]} className="w-[21px]" />
          <Group names={["xAxis", "yAxis", "zAxis", "error", "none"]} className="w-24" />
          <Group names={["first", "prev", "next", "last"]} className="w-[75px]" />
        </Band>
        <Band>
          <Group first names={["dbPen", "dbOpen", "dbView", "dbSheet", "dbCut"]} className="w-[91px]" />
        </Band>
      </div>

      <div className="flex h-[27px] shrink-0 border-b border-[#86868e] pt-px">
        <Band dots={false}>
          <Combo label="Font" value="al" className="mr-1 h-[22px] w-[77px] border-[#b8b8c4] border-l-transparent bg-[#f6f6fc] text-[14px] text-[#8a8a92]" />
          <Combo label="Font size" value="0" className="mr-0.5 h-[22px] w-[71px] border-[#b8b8c4] bg-[#f0eff4] text-[14px] text-[#8a8a92]" />
          <TextTools />
          <SplitTool name="alignLeft" dark />
          <SplitTool name="spacing" dark />
          <SplitTool name="fontColor" />
        </Band>
        <Band>
          <Group first names={["maskM", "maskX"]} className="w-[38px]" />
          <Group names={["split", "split2"]} className="w-11" />
          <Group names={["lock"]} className="w-[21px]" />
        </Band>
        <Band>
          <div className="flex gap-0.5 pl-0.5">
            <SplitTool name="fill" />
            <SplitTool name="pattern" />
            <SplitTool name="line" />
          </div>
          <Tool name="sun" />
          <div className="ml-0.5 mr-[3px] flex h-[22px] w-[73px] items-center border border-[#b8b8c4] bg-[#f8f8fc] pl-0.5 pr-1">
            <span className="h-0.5 w-6 shrink-0 bg-[#333]" />
            <select aria-label="Line style" className="min-w-0 flex-1 appearance-none bg-transparent pl-0.5 text-[14px] leading-5 text-[#8a8a92]">
              <option>实线</option>
            </select>
            <Caret />
          </div>
          <Combo label="Line width" value="0" className="mr-[5px] h-[22px] w-[71px] border-[#b8b8c4] bg-[#f0eff4] text-[14px] text-[#8a8a92]" />
          <button type="button" aria-label="Fill pattern" className="mr-1 h-3.5 w-[29px] border border-[#a9b4c8] bg-[#e8ecf8]" />
          <Caret />
          <Combo label="Pattern width" value="0" className="ml-1 mr-1 h-[22px] w-[71px] border-[#b8b8c4] bg-[#f0eff4] text-[14px] text-[#8a8a92]" />
          <SplitTool name="hatch" />
          <SplitTool name="border" dark />
          <Tool name="grid" />
        </Band>
        <Band>
          <Group first names={["importPen", "import123", "importCols", "importX"]} className="w-[76px]" />
          <Group names={["sheetCycle", "arrowsCycle", "sheets"]} className="w-[60px]" />
          <Group names={["batch"]} className="w-[22px]" />
          <Group names={["dial", "copies", "export"]} className="w-[58px]" />
        </Band>
      </div>

      <main className="relative min-h-0 flex-1 overflow-hidden border-l border-t border-[#85858a] bg-[#ababab]">
        <section className="absolute left-[549px] top-5 flex h-[640px] w-[652px] flex-col rounded-tr-lg border border-[#5f6b7c] bg-[#d3e1f2] px-[9px]">
          <header className="flex h-[35px] shrink-0 items-center bg-linear-to-b from-[#c3cfdf] to-[#d7e4f5]">
            <WindowButtons />
          </header>
          <div className="flex-1 border-t border-[#70757f] bg-[#c0c0c0] pt-[17px]">
            <div className="bg-white">
              <GlassChart />
            </div>
          </div>
        </section>

        <section className="absolute -left-1 top-[428px] flex h-[240px] w-[200px] flex-col border border-[#70757f] bg-white">
          <header className="h-9 shrink-0 border-b border-[#70757f] bg-linear-to-b from-[#c3cfdf] to-[#d7e4f5]" />
          <div className="-ml-1 pt-1 font-['Liberation_Mono',monospace] text-[15px] leading-[22px] text-[#444]">
            <p>ays</p>
            <p className="mt-5">ph</p>
            <p>ot</p>
          </div>
        </section>

        <BookWindow />

        <section className="absolute left-6 top-[101px] flex h-[547px] w-[559px] flex-col rounded-t-md border-[3px] border-[#8b1a80] bg-[#bccfe9] px-[6px] pb-[6px]">
          <header className="flex h-[33px] shrink-0 items-center bg-linear-to-b from-[#9db5d3] to-[#b4cee9] pt-1 font-['Open_Sans','Noto_Sans',sans-serif] text-[15px] text-[#222c3a]">
            <svg viewBox="0 0 18 18" className="mr-1 h-[18px] w-[18px]">
              <rect x="1" y="1" width="16" height="16" fill="#e8f4f4" stroke="#222" strokeWidth="1.500" />
              <rect x="4" y="3" width="11" height="10" fill="#30c4c4" />
              <path d="M4 7l4-3 3 3 4-3M4 11l4-2 3 1 4-2" fill="none" stroke="#115" />
              <path d="M3 3v12h12" fill="none" stroke="#b02050" />
            </svg>
            <h2>Graph11 *</h2>
            <WindowButtons active />
          </header>
          <div className="relative flex-1 border-l border-t border-[#70757f] bg-[#c0c0c0]">
            <div className="w-[538px] bg-[#fefefe]">
              <SolidChart />
            </div>
            <span className="absolute left-0 top-0 flex h-6 w-6 items-center justify-center bg-[#c0c0c0] font-['Liberation_Sans',sans-serif] text-xl font-bold">1</span>
          </div>
        </section>
      </main>

      <p className="absolute bottom-1.5 right-[15px] font-['Noto_Sans',sans-serif] text-[19px] leading-6 text-[#d8d8d8] text-shadow-[1px_1px_1px_#6b6b6b]">
        CSDN @2301_78112269
      </p>
    </div>
  );
}
